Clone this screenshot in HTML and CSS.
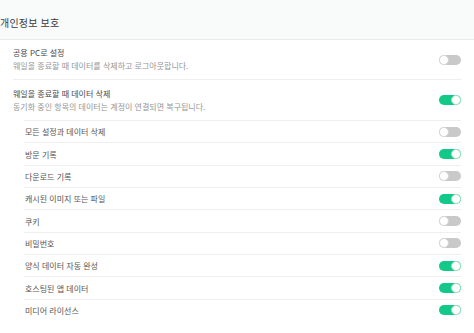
FILE: index.html
```html
<!DOCTYPE html>
<html lang="ko">
<head>
<meta charset="utf-8">
<link rel="stylesheet" href="styles.css">
</head>
<body>
<div class="page">
  <div class="header"><h1 class="title">개인정보 보호</h1></div>
  <div class="section">
    <div class="row">
      <div class="texts">
        <div class="label">공용 PC로 설정</div>
        <div class="desc">웨일을 종료할 때 데이터를 삭제하고 로그아웃합니다.</div>
      </div>
      <span class="toggle"></span>
    </div>
    <div class="row row-noline">
      <div class="texts">
        <div class="label">웨일을 종료할 때 데이터 삭제</div>
        <div class="desc">동기화 중인 항목의 데이터는 계정이 연결되면 복구됩니다.</div>
      </div>
      <span class="toggle on"></span>
    </div>
    <div class="sublist">
      <div class="subrow"><span class="sublabel">모든 설정과 데이터 삭제</span><span class="toggle"></span></div>
      <div class="subrow"><span class="sublabel">방문 기록</span><span class="toggle on"></span></div>
      <div class="subrow"><span class="sublabel">다운로드 기록</span><span class="toggle"></span></div>
      <div class="subrow"><span class="sublabel">캐시된 이미지 또는 파일</span><span class="toggle on"></span></div>
      <div class="subrow"><span class="sublabel">쿠키</span><span class="toggle"></span></div>
      <div class="subrow"><span class="sublabel">비밀번호</span><span class="toggle"></span></div>
      <div class="subrow"><span class="sublabel">양식 데이터 자동 완성</span><span class="toggle on"></span></div>
      <div class="subrow"><span class="sublabel">호스팅된 앱 데이터</span><span class="toggle on"></span></div>
      <div class="subrow"><span class="sublabel">미디어 라이선스</span><span class="toggle on"></span></div>
    </div>
  </div>
</div>
</body>
</html>
```
FILE: styles.css
```css
html, body {
  margin: 0;
  padding: 0;
  background: #ffffff;
}
body {
  font-family: "Noto Sans CJK KR", "Noto Sans", sans-serif;
  color: #333333;
}
.page {
  width: 474px;
  height: 333px;
  overflow: hidden;
}
.header {
  height: 40px;
  background: #f9fafa;
  border-bottom: 1px solid #eaecec;
  box-sizing: border-box;
  display: flex;
  align-items: center;
  padding-top: 6px;
}
.title {
  margin: 0;
  font-size: 10px;
  font-weight: normal;
  color: #3a3a3a;
  padding-left: 0;
  letter-spacing: 0.2px;
}
.section {
  padding: 0 13px;
}
.row {
  height: 40px;
  display: flex;
  align-items: center;
  justify-content: space-between;
  border-bottom: 1px solid #eeeeee;
  box-sizing: border-box;
}
.row-noline {
  border-bottom: none;
}
.texts {
  display: flex;
  flex-direction: column;
}
.label {
  font-size: 8px;
  line-height: 13px;
  color: #474747;
}
.desc {
  font-size: 8px;
  line-height: 14px;
  color: #969696;
}
.sublist {
  margin-left: 11px;
}
.subrow {
  height: 22.35px;
  border-top: 1px solid #efefef;
  box-sizing: border-box;
  display: flex;
  align-items: center;
  justify-content: space-between;
  padding-left: 1px;
}
.sublabel {
  font-size: 8px;
  color: #555555;
}
.toggle {
  position: relative;
  display: block;
  width: 22px;
  height: 10px;
  border-radius: 5px;
  background: #c9c9c9;
  flex: none;
}
.toggle::after {
  content: "";
  position: absolute;
  top: 0;
  left: 0;
  width: 8px;
  height: 8px;
  border-radius: 50%;
  background: #ffffff;
  border: 1px solid #d6d6d6;
}
.toggle.on {
  background: #12c98a;
}
.toggle.on::after {
  left: 12px;
  border-color: #9fe3c8;
}
```
